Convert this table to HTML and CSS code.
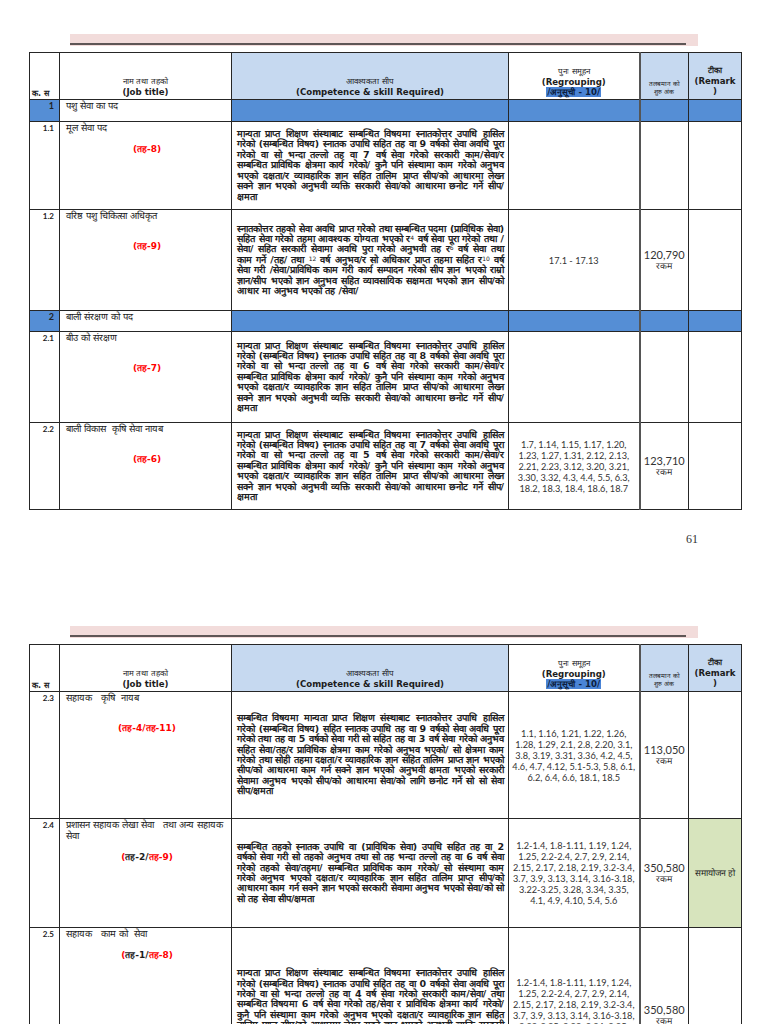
FILE: index.html
```html
<!DOCTYPE html>
<html lang="ne">
<head>
<meta charset="utf-8">
<title>पुनः समूहन तालिका</title>
<link rel="stylesheet" href="styles.css">
</head>
<body>
<main class="viewer">

  <section class="page page-first">
    <div class="page-rule"><div class="page-rule-line"></div></div>
    <table class="jobs">
      <colgroup>
        <col class="c-no"><col class="c-title"><col class="c-skill"><col class="c-group"><col class="c-pay"><col class="c-remark">
      </colgroup>
      <thead>
        <tr class="r-head">
          <th class="h-no">क. स</th>
          <th class="h-plain"><span class="h-np">नाम तथा तहको</span><span class="h-en">(Job title)</span></th>
          <th class="h-blue"><span class="h-np">आवश्यकता सीप</span><span class="h-en">(Competence &amp; skill Required)</span></th>
          <th class="h-plain"><span class="h-np">पुनः समूहन</span><span class="h-en">(Regrouping)</span><span class="h-en"><mark class="sel">/अनुसूची - 10/</mark></span></th>
          <th class="h-blue h-small"><span>तलबमान को</span><span>शुरु अंक</span></th>
          <th class="h-blue h-remark"><span class="h-np">टीका</span><span class="h-en">(Remark )</span></th>
        </tr>
      </thead>
      <tbody>
        <tr class="r-sec">
          <td class="num sec-blue">1</td>
          <td class="title">पशु सेवा का पद</td>
          <td class="sec-blue"></td><td class="sec-blue"></td><td class="sec-blue"></td><td class="sec-blue"></td>
        </tr>
        <tr class="r-11">
          <td class="num">1.1</td>
          <td class="title"><p>मूल सेवा पद</p><p class="grade gap-s">(तह-8)</p></td>
          <td class="para">मान्यता प्राप्त शिक्षण संस्थाबाट सम्बन्धित विषयमा स्नातकोत्तर उपाधि हासिल गरेको (सम्बन्धित विषय) स्नातक उपाधि सहित तह वा 9 वर्षको सेवा अवधि पूरा गरेको वा सो भन्दा तल्लो तह वा 7 वर्ष सेवा गरेको सरकारी काम/सेवा/र सम्बन्धित प्राविधिक क्षेत्रमा कार्य गरेको/ कुनै पनि संस्थामा काम गरेको अनुभव भएको दक्षता/र व्यावहारिक ज्ञान सहित तालिम प्राप्त सीप/को आधारमा लेख्न सक्ने ज्ञान भएको अनुभवी व्यक्ति सरकारी सेवा/को आधारमा छनोट गर्ने सीप/क्षमता</td>
          <td></td><td></td><td></td>
        </tr>
        <tr class="r-12">
          <td class="num">1.2</td>
          <td class="title"><p>वरिष्ठ पशु चिकित्सा अधिकृत</p><p class="grade gap-l">(तह-9)</p></td>
          <td class="para">स्नातकोत्तर तहको सेवा अवधि प्राप्त गरेको तथा सम्बन्धित पदमा (प्राविधिक सेवा) सहित सेवा गरेको तहमा आवश्यक योग्यता भएको र<sup>4</sup> वर्ष सेवा पूरा गरेको तथा /सेवा/ सहित सरकारी सेवामा अवधि पुरा गरेको अनुभवी तह र<sup>6</sup> वर्ष सेवा तथा काम गर्ने /तह/ तथा <sup>12</sup> वर्ष अनुभव/र सो अधिकार प्राप्त तहमा सहित र<sup>10</sup> वर्ष सेवा गरी /सेवा/प्राविधिक काम गरी कार्य सम्पादन गरेको सीप ज्ञान भएको राम्रो ज्ञान/सीप भएको ज्ञान अनुभव सहित व्यावसायिक सक्षमता भएको ज्ञान सीप/को आधार मा अनुभव भएको तह /सेवा/</td>
          <td class="refs">17.1 - 17.13</td>
          <td class="pay"><span class="pay-amt">120,790</span><span class="pay-unit">रकम</span></td>
          <td></td>
        </tr>
        <tr class="r-sec2">
          <td class="num sec-blue">2</td>
          <td class="title">बाली संरक्षण को पद</td>
          <td class="sec-blue"></td><td class="sec-blue"></td><td class="sec-blue"></td><td class="sec-blue"></td>
        </tr>
        <tr class="r-21">
          <td class="num">2.1</td>
          <td class="title"><p>बीउ को संरक्षण</p><p class="grade gap-l">(तह-7)</p></td>
          <td class="para">मान्यता प्राप्त शिक्षण संस्थाबाट सम्बन्धित विषयमा स्नातकोत्तर उपाधि हासिल गरेको (सम्बन्धित विषय) स्नातक उपाधि सहित तह वा 8 वर्षको सेवा अवधि पूरा गरेको वा सो भन्दा तल्लो तह वा 6 वर्ष सेवा गरेको सरकारी काम/सेवा/र सम्बन्धित प्राविधिक क्षेत्रमा कार्य गरेको/ कुनै पनि संस्थामा काम गरेको अनुभव भएको दक्षता/र व्यावहारिक ज्ञान सहित तालिम प्राप्त सीप/को आधारमा लेख्न सक्ने ज्ञान भएको अनुभवी व्यक्ति सरकारी सेवा/को आधारमा छनोट गर्ने सीप/क्षमता</td>
          <td></td><td></td><td></td>
        </tr>
        <tr class="r-22">
          <td class="num">2.2</td>
          <td class="title"><p>बाली विकास&nbsp; कृषि सेवा नायब</p><p class="grade gap-l">(तह-6)</p></td>
          <td class="para">मान्यता प्राप्त शिक्षण संस्थाबाट सम्बन्धित विषयमा स्नातकोत्तर उपाधि हासिल गरेको (सम्बन्धित विषय) स्नातक उपाधि सहित तह वा 7 वर्षको सेवा अवधि पूरा गरेको वा सो भन्दा तल्लो तह वा 5 वर्ष सेवा गरेको सरकारी काम/सेवा/र सम्बन्धित प्राविधिक क्षेत्रमा कार्य गरेको/ कुनै पनि संस्थामा काम गरेको अनुभव भएको दक्षता/र व्यावहारिक ज्ञान सहित तालिम प्राप्त सीप/को आधारमा लेख्न सक्ने ज्ञान भएको अनुभवी व्यक्ति सरकारी सेवा/को आधारमा छनोट गर्ने सीप/क्षमता</td>
          <td class="refs">1.7, 1.14, 1.15, 1.17, 1.20,<br>1.23, 1.27, 1.31, 2.12, 2.13,<br>2.21, 2.23, 3.12, 3.20, 3.21,<br>3.30, 3.32, 4.3, 4.4, 5.5, 6.3,<br>18.2, 18.3, 18.4, 18.6, 18.7</td>
          <td class="pay"><span class="pay-amt">123,710</span><span class="pay-unit">रकम</span></td>
          <td></td>
        </tr>
      </tbody>
    </table>
    <p class="page-num">61</p>
  </section>

  <section class="page page-second">
    <div class="page-rule"><div class="page-rule-line"></div></div>
    <table class="jobs">
      <colgroup>
        <col class="c-no"><col class="c-title"><col class="c-skill"><col class="c-group"><col class="c-pay"><col class="c-remark">
      </colgroup>
      <thead>
        <tr class="r-head">
          <th class="h-no">क. स</th>
          <th class="h-plain"><span class="h-np">नाम तथा तहको</span><span class="h-en">(Job title)</span></th>
          <th class="h-blue"><span class="h-np">आवश्यकता सीप</span><span class="h-en">(Competence &amp; skill Required)</span></th>
          <th class="h-plain"><span class="h-np">पुनः समूहन</span><span class="h-en">(Regrouping)</span><span class="h-en"><mark class="sel">/अनुसूची - 10/</mark></span></th>
          <th class="h-blue h-small"><span>तलबमान को</span><span>शुरु अंक</span></th>
          <th class="h-blue h-remark"><span class="h-np">टीका</span><span class="h-en">(Remark )</span></th>
        </tr>
      </thead>
      <tbody>
        <tr class="r-23">
          <td class="num">2.3</td>
          <td class="title"><p>सहायक&nbsp;&nbsp; कृषि&nbsp; नायब</p><p class="grade gap-l">(तह-4/तह-11)</p></td>
          <td class="para">सम्बन्धित विषयमा मान्यता प्राप्त शिक्षण संस्थाबाट स्नातकोत्तर उपाधि हासिल गरेको (सम्बन्धित विषय) सहित स्नातक उपाधि तह वा 9 वर्षको सेवा अवधि पूरा गरेको तथा तह वा 5 वर्षको सेवा गरी सो सहित तह वा 3 वर्ष सेवा गरेको अनुभव सहित सेवा/तह/र प्राविधिक क्षेत्रमा काम गरेको अनुभव भएको/ सो क्षेत्रमा काम गरेको तथा सोही तहमा दक्षता/र व्यावहारिक ज्ञान सहित तालिम प्राप्त ज्ञान भएको सीप/को आधारमा काम गर्न सक्ने ज्ञान भएको अनुभवी क्षमता भएको सरकारी सेवामा अनुभव भएको सीप/को आधारमा सेवा/को लागि छनोट गर्ने सो सो सेवा सीप/क्षमता</td>
          <td class="refs">1.1, 1.16, 1.21, 1.22, 1.26,<br>1.28, 1.29, 2.1, 2.8, 2.20, 3.1,<br>3.8, 3.19, 3.31, 3.36, 4.2, 4.5,<br>4.6, 4.7, 4.12, 5.1-5.3, 5.8, 6.1,<br>6.2, 6.4, 6.6, 18.1, 18.5</td>
          <td class="pay"><span class="pay-amt">113,050</span><span class="pay-unit">रकम</span></td>
          <td></td>
        </tr>
        <tr class="r-24">
          <td class="num">2.4</td>
          <td class="title"><p>प्रशासन सहायक लेखा सेवा&nbsp;&nbsp; तथा अन्य सहायक सेवा</p><p class="grade gap-s">(<span class="ink">तह-2/</span>तह-9)</p></td>
          <td class="para">सम्बन्धित तहको स्नातक उपाधि वा (प्राविधिक सेवा) उपाधि सहित तह वा 2 वर्षको सेवा गरी सो तहको अनुभव तथा सो तह भन्दा तल्लो तह वा 6 वर्ष सेवा गरेको तहको सेवा/तहमा/ सम्बन्धित प्राविधिक काम गरेको/ सो संस्थामा काम गरेको अनुभव भएको दक्षता/र व्यावहारिक ज्ञान सहित तालिम प्राप्त सीप/को आधारमा काम गर्न सक्ने ज्ञान भएको सरकारी सेवामा अनुभव भएको सेवा/को सो सो तह सेवा सीप/क्षमता</td>
          <td class="refs">1.2-1.4, 1.8-1.11, 1.19, 1.24,<br>1.25, 2.2-2.4, 2.7, 2.9, 2.14,<br>2.15, 2.17, 2.18, 2.19, 3.2-3.4,<br>3.7, 3.9, 3.13, 3.14, 3.16-3.18,<br>3.22-3.25, 3.28, 3.34, 3.35,<br>4.1, 4.9, 4.10, 5.4, 5.6</td>
          <td class="pay"><span class="pay-amt">350,580</span><span class="pay-unit">रकम</span></td>
          <td class="remark-green">समायोजन हो</td>
        </tr>
        <tr class="r-25">
          <td class="num">2.5</td>
          <td class="title"><p>सहायक&nbsp;&nbsp; काम को&nbsp; सेवा</p><p class="grade gap-s">(<span class="ink">तह-1/</span>तह-8)</p></td>
          <td class="para">मान्यता प्राप्त शिक्षण संस्थाबाट सम्बन्धित विषयमा स्नातकोत्तर उपाधि हासिल गरेको (सम्बन्धित विषय) स्नातक उपाधि सहित तह वा 0 वर्षको सेवा अवधि पूरा गरेको वा सो भन्दा तल्लो तह वा 4 वर्ष सेवा गरेको सरकारी काम/सेवा/ तथा सम्बन्धित विषयमा 6 वर्ष सेवा गरेको तह/सेवा र प्राविधिक क्षेत्रमा कार्य गरेको/ कुनै पनि संस्थामा काम गरेको अनुभव भएको दक्षता/र व्यावहारिक ज्ञान सहित तालिम प्राप्त सीप/को आधारमा लेख्न सक्ने ज्ञान भएको अनुभवी व्यक्ति सरकारी सेवा/को आधारमा छनोट गर्ने सीप/क्षमता भएको सरकारी सेवामा अनुभव भएको सहित व्यावहारिक ज्ञान भएको सम्बन्धित क्षेत्रमा तालिम प्राप्त गरेको तथा सरकारी सेवामा काम गर्ने अनुभव भएको व्यक्ति सो तहको पदमा नियुक्त हुन योग्य हुनेछ</td>
          <td class="refs">1.2-1.4, 1.8-1.11, 1.19, 1.24,<br>1.25, 2.2-2.4, 2.7, 2.9, 2.14,<br>2.15, 2.17, 2.18, 2.19, 3.2-3.4,<br>3.7, 3.9, 3.13, 3.14, 3.16-3.18,<br>3.22-3.25, 3.28, 3.34, 3.35,<br>4.1, 4.9, 4.10, 5.4, 5.6,<br>6.5, 6.7, 18.8</td>
          <td class="pay"><span class="pay-amt">350,580</span><span class="pay-unit">रकम</span></td>
          <td></td>
        </tr>
      </tbody>
    </table>
  </section>

</main>
</body>
</html>
```

FILE: styles.css
```css
* { box-sizing: border-box; }

html, body {
  margin: 0;
  background: #ffffff;
}

body {
  font-family: "DejaVu Sans", sans-serif;
  color: #1c1c1c;
  overflow: hidden;
}

.viewer {
  width: 768px;
}

.page {
  padding-left: 29px;
}

.page-first {
  padding-top: 34px;
}

.page-second {
  padding-top: 80px;
}

.page-rule {
  margin-left: 41px;
  width: 628px;
  height: 12px;
  background: #f2dcdb;
  display: flex;
  align-items: flex-end;
  padding-bottom: 1px;
}

.page-rule-line {
  width: 616px;
  height: 2px;
  background: #5e5656;
}

.jobs {
  margin-top: 6px;
  border-collapse: collapse;
  table-layout: fixed;
  width: 712px;
}

.c-no { width: 30px; }
.c-title { width: 172px; }
.c-skill { width: 277px; }
.c-group { width: 131px; }
.c-pay { width: 49px; }
.c-remark { width: 53px; }

.jobs th,
.jobs td {
  border: 1px solid #262626;
}

.jobs td:nth-child(5),
.jobs th:nth-child(5) {
  border-left: 2px solid #555555;
}

/* header */
.r-head { height: 47px; }

.jobs th {
  font-weight: normal;
  vertical-align: bottom;
  text-align: center;
  padding: 0 1px 2px;
}

.h-blue { background: #c6d9f0; }
.h-plain { background: #ffffff; }

.h-np {
  display: block;
  font-size: 8px;
  line-height: 10px;
}

.h-en {
  display: block;
  font-size: 8.6px;
  font-weight: bold;
  line-height: 10px;
}

.jobs .h-no {
  text-align: left;
  padding: 0 0 1px 2px;
  font-size: 8px;
  font-weight: bold;
}

.jobs .h-small {
  font-size: 6.4px;
  line-height: 7.5px;
  padding-bottom: 3px;
}
.h-small span { display: block; }

.jobs .h-remark {
  padding: 0 4px 3px;
}
.h-remark .h-np { font-weight: bold; }

.sel {
  background: #4a84d6;
  color: #0d1e3d;
  padding: 0 1px;
}

/* sections */
.r-sec { height: 22px; }
.r-sec2 { height: 21px; }

.jobs .sec-blue { background: #558ed5; }

.jobs .num {
  vertical-align: top;
  text-align: right;
  padding: 1px 5px 0 0;
  font-family: "Lato", sans-serif;
  font-weight: bold;
  font-size: 8px;
  line-height: 10px;
  color: #222;
}

.jobs .r-sec .num,
.jobs .r-sec2 .num { font-size: 9px; }

.jobs .title {
  vertical-align: top;
  padding: 0 3px 0 6px;
  font-size: 9.5px;
  line-height: 11px;
}

.title p { margin: 0; }

.grade {
  text-align: center;
  font-weight: bold;
  font-size: 9px;
  color: #ff0000;
}

.grade .ink { color: #1c1c1c; }

.title .gap-s { margin-top: 11px; }
.title .gap-l { margin-top: 20px; }

.jobs .para {
  vertical-align: middle;
  padding: 0 4px 0 5px;
  font-size: 9.5px;
  font-weight: bold;
  line-height: 10.4px;
  text-align: justify;
}

.para sup {
  font-size: 6px;
  font-weight: normal;
  line-height: 0;
  vertical-align: 2px;
}

.jobs .refs {
  vertical-align: middle;
  text-align: center;
  padding: 0;
  font-family: "Lato", sans-serif;
  font-size: 9.2px;
  line-height: 11px;
  color: #333;
}

.jobs .pay {
  vertical-align: middle;
  text-align: center;
  padding: 0;
  color: #333;
}

.pay-amt {
  display: block;
  font-family: "Lato", sans-serif;
  font-size: 11px;
  line-height: 12px;
}

.pay-unit {
  display: block;
  font-size: 9px;
  line-height: 11px;
}

.jobs .remark-green {
  background: #d7e4bd;
  vertical-align: middle;
  text-align: center;
  padding: 0 3px;
  font-size: 8.7px;
  line-height: 11px;
}

/* body row heights */
.r-11 { height: 88px; }
.r-12 { height: 101px; }
.r-21 { height: 91px; }
.r-22 { height: 87px; }
.r-23 { height: 127px; }
.r-24 { height: 109px; }
.r-25 { height: 175px; }

.page-num {
  margin: 22px 0 0;
  width: 669px;
  text-align: right;
  font-family: "Liberation Serif", serif;
  font-size: 12px;
  line-height: 14px;
  color: #333;
}
```
